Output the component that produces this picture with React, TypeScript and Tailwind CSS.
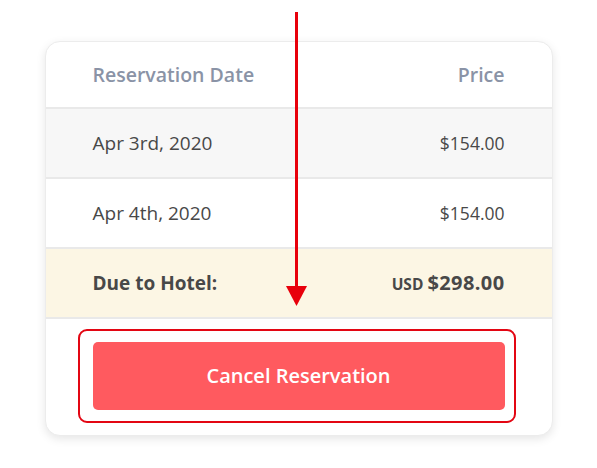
const rows = [
    { date: "Apr 3rd, 2020", price: "$154.00", shaded: true },
    { date: "Apr 4th, 2020", price: "$154.00", shaded: false },
]

const App = () => {
    return (
        <div className="relative w-[597px] h-[468px] bg-white overflow-hidden" style={{ fontFamily: "'Open Sans', Lato, sans-serif" }}>
            <div className="absolute top-0 left-0 w-full pt-[41px]">
                <div className="mx-auto w-[508px] bg-white rounded-[15px] border border-[#ececec] shadow-[0_3px_10px_rgba(0,0,0,0.10)] overflow-hidden">
                    <div className="h-[67px] px-[47px] flex items-center justify-between border-b-2 border-[#e9e9e9]">
                        <span className="text-[19.5px] font-semibold text-[#8a93a6]">Reservation Date</span>
                        <span className="text-[19.5px] font-semibold text-[#8a93a6]">Price</span>
                    </div>
                    {rows.map((row) => (
                        <div
                            key={row.date}
                            className={`h-[70px] px-[47px] flex items-center justify-between border-b-2 border-[#e9e9e9] text-[#484848] ${row.shaded ? 'bg-[#f7f7f7]' : 'bg-white'}`}
                        >
                            <span className="text-[19px]">{row.date}</span>
                            <span className="text-[17.5px]">{row.price}</span>
                        </div>
                    ))}
                    <div className="h-[70px] px-[47px] flex items-center justify-between bg-[#fcf6e4] border-b-2 border-[#e9e9e9] text-[#484848]">
                        <span className="text-[19px] font-bold">Due to Hotel:</span>
                        <span className="flex items-baseline gap-[4px] font-bold">
                            <span className="text-[15.5px]">USD</span>
                            <span className="text-[20px] tracking-[0.4px]">$298.00</span>
                        </span>
                    </div>
                    <div className="pt-[10px] pb-[12px] pl-[32px] pr-[36px]">
                        <div className="border-2 border-[#e30613] rounded-[9px] pt-[11px] pb-[11px] pl-[13px] pr-[9px]">
                            <button className="w-full h-[68px] rounded-[5px] bg-[#ff5a5f] text-white text-[20px] font-semibold">
                                Cancel Reservation
                            </button>
                        </div>
                    </div>
                </div>
            </div>
            {/* annotation arrow */}
            <div className="absolute left-[295px] top-[12px] w-[3px] h-[278px] bg-[#e8000b]" />
            <svg className="absolute left-[286px] top-[286px]" width="21" height="20" viewBox="0 0 21 20">
                <polygon points="0,0 21,0 10.5,20" fill="#e8000b" />
            </svg>
        </div>
    )
}

export default App
